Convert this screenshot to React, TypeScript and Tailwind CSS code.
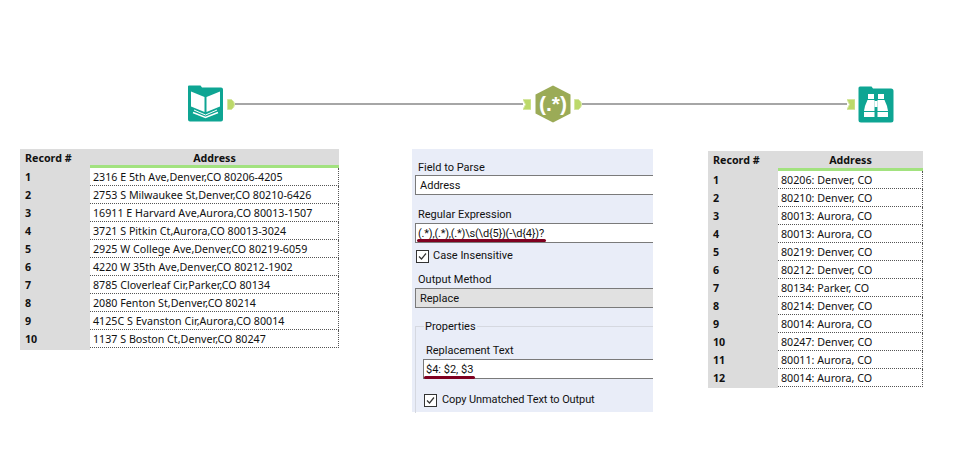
const LEFT_ROWS = [
  '2316 E 5th Ave,Denver,CO 80206-4205',
  '2753 S Milwaukee St,Denver,CO 80210-6426',
  '16911 E Harvard Ave,Aurora,CO 80013-1507',
  '3721 S Pitkin Ct,Aurora,CO 80013-3024',
  '2925 W College Ave,Denver,CO 80219-6059',
  '4220 W 35th Ave,Denver,CO 80212-1902',
  '8785 Cloverleaf Cir,Parker,CO 80134',
  '2080 Fenton St,Denver,CO 80214',
  '4125C S Evanston Cir,Aurora,CO 80014',
  '1137 S Boston Ct,Denver,CO 80247',
]

const RIGHT_ROWS = [
  '80206: Denver, CO',
  '80210: Denver, CO',
  '80013: Aurora, CO',
  '80013: Aurora, CO',
  '80219: Denver, CO',
  '80212: Denver, CO',
  '80134: Parker, CO',
  '80214: Denver, CO',
  '80014: Aurora, CO',
  '80247: Denver, CO',
  '80011: Aurora, CO',
  '80014: Aurora, CO',
]

function OutAnchor() {
  return (
    <svg width="8" height="11" viewBox="0 0 8 11" className="shrink-0">
      <path d="M0.5 0.5H4.5Q7.5 2.5 7.5 5.5Q7.5 8.5 4.5 10.5H0.5Z" fill="#bcd96a" stroke="#d5e6a0" />
    </svg>
  )
}

function InAnchor() {
  return (
    <svg width="8" height="11" viewBox="0 0 8 11" className="shrink-0">
      <path d="M0 0.5H8V10.5H0L2.5 5.5Z" fill="#bcd96a" stroke="#d5e6a0" />
    </svg>
  )
}

function Wire({ width }: { width: string }) {
  return <div className={`h-0.5 bg-[#a6a6a6] ${width}`} />
}

function BookIcon() {
  return (
    <svg width="37" height="38" viewBox="0 0 37 38" className="shrink-0">
      <path d="M2 0.5H13.5L15 2.5H34Q36 2.5 36 4.5V34.5Q36 36.5 34 36.5H3Q1 36.5 1 34.5V1.5Q1 0.5 2 0.5Z" fill="#0ea593" />
      <path d="M4 6.5L17.5 12V27L4 21.5Z" fill="#fff" />
      <path d="M33 6.5L19.5 12V27L33 21.5Z" fill="#fff" />
      <path d="M7 25L18.5 30L30 25" fill="none" stroke="#fff" strokeWidth="1" />
      <path d="M6 27.5L18.5 32.5L31 27.5" fill="none" stroke="#fff" strokeWidth="1.5" />
    </svg>
  )
}

function RegexIcon() {
  return (
    <svg width="38" height="38" viewBox="0 0 38 38" className="shrink-0">
      <path d="M19 0.5L36.5 9.5V28.5L19 37.5L1.5 28.5V9.5Z" fill="#9bab57" />
      <text
        x="19"
        y="25.5"
        textAnchor="middle"
        fill="#fff"
        fontSize="21"
        fontWeight="700"
        fontFamily="'Liberation Sans', sans-serif"
      >
        (.*)
      </text>
    </svg>
  )
}

function BrowseIcon() {
  return (
    <svg width="36" height="37" viewBox="0 0 36 37" className="shrink-0">
      <path d="M2 0.5H13.5L15 2.5H33Q35.5 2.5 35.5 5V34Q35.5 36.5 33 36.5H3Q0.5 36.5 0.5 34V2Q0.5 0.5 2 0.5Z" fill="#0ea593" />
      <rect x="10" y="8" width="6" height="5" fill="#fff" />
      <rect x="20" y="8" width="6" height="5" fill="#fff" />
      <path d="M9.5 14H16.5V25H6L7 20Z" fill="#fff" />
      <path d="M26.5 14H19.5V25H30L29 20Z" fill="#fff" />
      <rect x="16.5" y="15" width="3" height="6" fill="#fff" />
      <rect x="6" y="26" width="10.5" height="5" fill="#fff" />
      <rect x="19.5" y="26" width="10.5" height="5" fill="#fff" />
    </svg>
  )
}

function ResultTable({
  rows,
  width,
  header,
  top,
  stub,
}: {
  rows: string[]
  width: string
  header: string
  top: string
  stub: string
}) {
  return (
    <div className={`shrink-0 text-[10.7px] text-[#111] ${width} ${top}`}>
      <div className={`flex bg-[#dcdcdc] font-bold ${header}`}>
        <div className="w-[70px] pl-[5px] leading-[18px]">Record #</div>
        <div className="flex-1 border-b-[3px] border-[#a2e27f] text-center leading-[18px]">Address</div>
      </div>
      {rows.map((row, i) => (
        <div key={row + i} className="flex h-[18px] leading-[19px]">
          <div className="w-[70px] bg-[#dcdcdc] pl-[5px] font-bold">{i + 1}</div>
          <div className="flex-1 border-b border-r border-dotted border-[#555] pl-[3px]">{row}</div>
        </div>
      ))}
      <div className={`w-[70px] bg-[#dcdcdc] ${stub}`} />
    </div>
  )
}

function Check({ label, gap }: { label: string; gap: string }) {
  return (
    <div className={`flex items-center ${gap}`}>
      <div className="flex h-[13px] w-[13px] items-center justify-center border border-[#333] bg-white">
        <svg width="11" height="11" viewBox="0 0 11 11">
          <path d="M2 5.5L4.5 8L9 2.5" fill="none" stroke="#333" strokeWidth="1.2" />
        </svg>
      </div>
      <span>{label}</span>
    </div>
  )
}

function FieldBox({ children, grey }: { children: React.ReactNode; grey?: boolean }) {
  return (
    <div
      className={`relative h-[20px] border-y border-l border-[#7a7a7a] pl-1 leading-[19px] ${grey ? 'bg-[#e1e1e1]' : 'bg-white'}`}
    >
      {children}
    </div>
  )
}

function ConfigPanel() {
  return (
    <div className="h-[263px] w-[241px] shrink-0 bg-[#e9edf8] pl-[3px] pt-[10px] font-['Roboto',sans-serif] text-[11px] text-[#111]">
      <div className="h-[16px] pl-[3px] leading-[18px]">Field to Parse</div>
      <FieldBox>Address</FieldBox>
      <div className="mt-[10px] h-[18px] pl-[3px] leading-[20px]">Regular Expression</div>
      <FieldBox>
        <span className="relative left-[-2px] tracking-[-0.2px]">{'(.*),(.*),(.*)\\s(\\d{5})(-\\d{4})?'}</span>
        <div className="absolute left-[1px] top-[15px] h-[3px] w-[129px] rounded-sm bg-[#7f0020]" />
      </FieldBox>
      <div className="mt-[4px] h-[16px] pl-[1px] pt-px leading-[16px]">
        <Check label="Case Insensitive" gap="gap-[4px]" />
      </div>
      <div className="mt-[8px] h-[16px] pl-[3px] leading-[18px]">Output Method</div>
      <div className="mt-[1px]">
        <FieldBox grey>Replace</FieldBox>
      </div>
      <div className="relative mt-[18px] h-[87px] border-l border-t border-[#d5d8e0] pl-[7px] pt-[16px]">
        <div className="absolute left-[8px] top-[-8px] bg-[#e9edf8] px-[1px] leading-[16px]">Properties</div>
        <div className="pl-[3px] leading-[16px]">Replacement Text</div>
        <FieldBox>
          <span className="relative left-[-2px]">$4: $2, $3</span>
          <div className="absolute left-0 top-[16px] h-[3px] w-[51px] rounded-sm bg-[#7f0020]" />
        </FieldBox>
        <div className="mt-[13px] pl-px leading-[16px] tracking-[-0.1px]">
          <Check label="Copy Unmatched Text to Output" gap="gap-[5px]" />
        </div>
      </div>
    </div>
  )
}

export default function App() {
  return (
    <div className="h-[456px] w-[965px] overflow-hidden bg-white pt-[85px] font-['Noto_Sans','Liberation_Sans',sans-serif]">
      <div className="flex h-[38px] items-center pl-[187px]">
        <BookIcon />
        <div className="ml-[3px] flex items-center">
          <OutAnchor />
          <Wire width="w-[288px]" />
          <InAnchor />
        </div>
        <div className="ml-[3px]">
          <RegexIcon />
        </div>
        <div className="ml-[2px] flex items-center">
          <OutAnchor />
          <Wire width="w-[265px]" />
          <InAnchor />
        </div>
        <div className="ml-[3px]">
          <BrowseIcon />
        </div>
      </div>
      <div className="mt-[26px] flex items-start pl-[20px]">
        <ResultTable rows={LEFT_ROWS} width="w-[319px]" header="h-[19px]" top="mt-0" stub="h-[2px]" />
        <div className="ml-[73px]">
          <ConfigPanel />
        </div>
        <div className="ml-[55px]">
          <ResultTable rows={RIGHT_ROWS} width="w-[215px]" header="h-[20px]" top="mt-[2px]" stub="h-[1px]" />
        </div>
      </div>
    </div>
  )
}
